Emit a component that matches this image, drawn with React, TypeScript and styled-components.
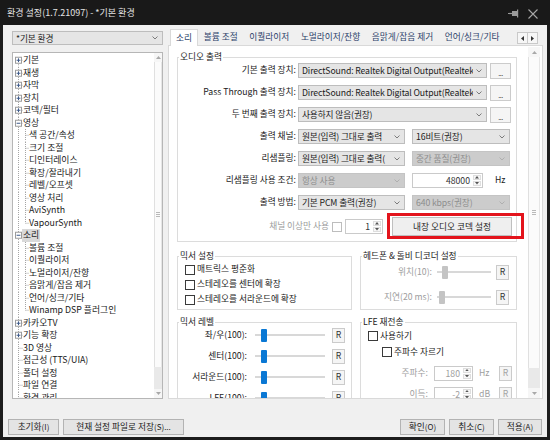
import React from 'react'
import styled, { createGlobalStyle } from 'styled-components'

const GlobalStyle = createGlobalStyle`
	* { box-sizing: border-box; }
	html, body { margin: 0; padding: 0; background: #1c1c1c; }
	body {
		font-family: "Noto Sans CJK KR", "Noto Sans", sans-serif;
		font-size: 8.7px;
		line-height: 1.2;
		color: #1a1a1a;
	}
	button { font-family: inherit; font-size: inherit; cursor: default; }
`

const Window = styled.div`
	width: 550px;
	height: 440px;
	display: flex;
	flex-direction: column;
	background: #1c1c1c;
	overflow: hidden;
`

const TitleBar = styled.div`
	height: 25px;
	flex: none;
	display: flex;
	align-items: center;
	padding: 2px 12px 0 7px;
	background: #191919;
	color: #e4e4e4;
	font-size: 9px;
`

const Title = styled.div`
	flex: 1;
	white-space: nowrap;
`

const TitleButtons = styled.div`
	display: flex;
	align-items: center;
	gap: 8px;
`

const Body = styled.div`
	flex: 1;
	margin: 0 3px 3px;
	background: #f0f0f0;
	display: flex;
	flex-direction: column;
`

const Main = styled.div`
	height: 374px;
	flex: none;
	display: flex;
	gap: 5px;
	padding: 4px 4px 0 9px;
`

const Side = styled.div`
	width: 151px;
	flex: none;
	display: flex;
	flex-direction: column;
	padding-top: 2px;
`

const TreeBox = styled.div`
	flex: 1;
	margin-top: 7px;
	display: flex;
	background: #fff;
	border: 1px solid #b6b6b6;
	overflow: hidden;
`

const TreeList = styled.div`
	flex: 1;
	min-width: 0;
	padding-top: 1px;
	overflow: hidden;
`

const TreeRow = styled.div`
	height: 12.5px;
	display: flex;
	align-items: center;
	white-space: nowrap;
	line-height: 12.5px;
	font-size: 8.8px;
`

const GuideSvg = styled.svg`
	display: block;
	flex: none;
`

const TreeText = styled.span<{ $selected?: boolean }>`
	padding: 0 1px;
	margin-left: -1px;
	background: ${(p) => (p.$selected ? '#d9d9d9' : 'transparent')};
`

const ScrollBar = styled.div<{ $w: number }>`
	width: ${(p) => p.$w}px;
	flex: none;
	display: flex;
	flex-direction: column;
	background: #e9e9e9;
`

const ScrollArrow = styled.div<{ $h: number }>`
	height: ${(p) => p.$h}px;
	flex: none;
	display: flex;
	align-items: center;
	justify-content: center;
	background: #f6f6f6;
`

const ScrollThumb = styled.div<{ $h: number }>`
	height: ${(p) => p.$h}px;
	flex: none;
	display: flex;
	flex-direction: column;
	align-items: center;
	justify-content: center;
	gap: 1px;
	background: #fbfbfb;
	border-left: 1px solid #e0e0e0;
	border-right: 1px solid #e6e6e6;
`

const Grip = styled.span`
	width: 4px;
	height: 1px;
	background: #b9b9b9;
`

const ScrollRest = styled.div`
	flex: 1;
`

const Content = styled.div`
	width: 375px;
	flex: none;
	display: flex;
	flex-direction: column;
`

const TabStrip = styled.div`
	height: 16px;
	flex: none;
	display: flex;
	position: relative;
	z-index: 1;
`

const Tabs = styled.div`
	flex: 1;
	min-width: 0;
	height: 17px;
	display: flex;
	padding-left: 2px;
	overflow: hidden;
`

const Tab = styled.div<{ $active?: boolean }>`
	flex: none;
	height: 17px;
	display: flex;
	align-items: center;
	padding: 0 ${(p) => (p.$active ? 5 : 5.8)}px;
	white-space: nowrap;
	color: #2b3f69;
	background: ${(p) => (p.$active ? '#fff' : 'transparent')};
	border: ${(p) => (p.$active ? '1px solid #d9d9d9' : 'none')};
	border-bottom: none;
`

const TabScroller = styled.div`
	flex: none;
	display: flex;
	height: 12px;
	margin: 3px 5px 0 1px;
`

const TabArrow = styled.div`
	width: 10.5px;
	height: 12px;
	display: flex;
	align-items: center;
	justify-content: center;
	background: #f6f6f6;
	border: 1px solid #c9c9c9;
	& + & {
		border-left: none;
	}
`

const Panel = styled.div`
	flex: 1;
	display: flex;
	background: #fff;
	border: 1px solid #d9d9d9;
	overflow: hidden;
`

const Page = styled.div`
	flex: 1;
	min-width: 0;
	padding: 6px 11px 0 8px;
	overflow: hidden;
`

const PanelScrollSlot = styled.div`
	display: flex;
	padding: 1px 2px 0 0;
`

const Group = styled.fieldset<{ $w?: number }>`
	margin: 0;
	padding: 0;
	min-width: 0;
	border: 1px solid #dcdcdc;
	${(p) => (p.$w ? `width: ${p.$w}px; flex: none;` : '')}
`

const Legend = styled.legend`
	margin-left: 1px;
	padding: 0 1px;
	line-height: 10px;
`

const GroupRow = styled.div<{ $top: number }>`
	display: flex;
	gap: 8px;
	margin-top: ${(p) => p.$top}px;
`

const OutputGrid = styled.div`
	display: grid;
	grid-template-columns: 118px 1fr;
	grid-auto-rows: 15px;
	column-gap: 2px;
	row-gap: 7px;
	align-items: center;
	padding: 1px 4px 0 0;
`

const FieldLabel = styled.div<{ $muted?: boolean }>`
	text-align: right;
	white-space: nowrap;
	color: ${(p) => (p.$muted ? '#9d9d9d' : '#1a1a1a')};
`

const Controls = styled.div<{ $gap: number }>`
	display: flex;
	align-items: center;
	gap: ${(p) => p.$gap}px;
`

const ComboBox = styled.div<{ $w: number; $h?: number; $disabled?: boolean }>`
	width: ${(p) => p.$w}px;
	height: ${(p) => p.$h ?? 15}px;
	flex: none;
	display: flex;
	align-items: center;
	gap: 3px;
	padding: 0 4px 0 3px;
	background: ${(p) => (p.$disabled ? '#cccccc' : '#e5e5e5')};
	border: 1px solid ${(p) => (p.$disabled ? '#c4c4c4' : '#bdbdbd')};
	color: ${(p) => (p.$disabled ? '#8c8c8c' : '#1a1a1a')};
`

const ComboValue = styled.span`
	flex: 1;
	min-width: 0;
	overflow: hidden;
	white-space: nowrap;
	line-height: 13px;
	letter-spacing: -0.12px;
`

const SmallButton = styled.button<{ $w: number; $h: number; $muted?: boolean }>`
	width: ${(p) => p.$w}px;
	height: ${(p) => p.$h}px;
	flex: none;
	margin: 0;
	padding: 0;
	display: flex;
	align-items: center;
	justify-content: center;
	background: #f5f5f5;
	border: 1px solid #cbcbcb;
	border-radius: 0;
	color: ${(p) => (p.$muted ? '#a3a3a3' : '#333')};
	line-height: 1;
`

const Dots = styled.span`
	font-size: 7px;
	margin-top: 5px;
	letter-spacing: -0.5px;
`

const SpinBox = styled.div<{ $w: number; $muted?: boolean }>`
	width: ${(p) => p.$w}px;
	height: 15px;
	flex: none;
	display: flex;
	background: #fff;
	border: 1px solid #cacaca;
	color: ${(p) => (p.$muted ? '#9d9d9d' : '#333')};
`

const SpinValue = styled.span`
	flex: 1;
	text-align: right;
	padding-right: 3px;
	line-height: 13px;
	white-space: nowrap;
`

const SpinArrows = styled.div`
	width: 9px;
	flex: none;
	display: flex;
	flex-direction: column;
	gap: 1px;
	padding: 1px 1px 1px 0;
`

const SpinArrow = styled.div`
	flex: 1;
	display: flex;
	align-items: center;
	justify-content: center;
	background: #f7f7f7;
	border: 1px solid #dedede;
`

const Unit = styled.span<{ $muted?: boolean; $left?: number }>`
	margin-left: ${(p) => p.$left ?? 0}px;
	white-space: nowrap;
	color: ${(p) => (p.$muted ? '#9d9d9d' : '#1a1a1a')};
`

const ChannelRow = styled.div`
	display: flex;
	justify-content: flex-end;
	align-items: center;
	gap: 3px;
	height: 19px;
	margin-top: 7px;
	padding: 0 4px 0 0;
	margin-bottom: 5px;
`

const CodecWrap = styled.div`
	position: relative;
	margin-left: 6px;
`

const RedFrame = styled.span`
	position: absolute;
	inset: -4px -12px -3px -5px;
	border: 3px solid #e3141c;
	pointer-events: none;
`

const CodecButton = styled.button`
	width: 120px;
	height: 19px;
	margin: 0;
	padding: 0;
	display: block;
	background: #efefef;
	border: 1px solid #bfbfbf;
	border-radius: 0;
	color: #1a1a1a;
`

const CheckList = styled.div<{ $pad: string }>`
	display: flex;
	flex-direction: column;
	padding: ${(p) => p.$pad};
`

const CheckRow = styled.div<{ $h: number; $indent: number; $top?: number }>`
	height: ${(p) => p.$h}px;
	margin-top: ${(p) => p.$top ?? 0}px;
	display: flex;
	align-items: center;
	gap: 2px;
	padding-left: ${(p) => p.$indent}px;
	white-space: nowrap;
`

const CheckBox = styled.span<{ $muted?: boolean }>`
	width: 10px;
	height: 10px;
	flex: none;
	background: #fff;
	border: 1px solid ${(p) => (p.$muted ? '#bdbdbd' : '#3a3a3a')};
`

const LevelGrid = styled.div<{ $cols: string; $gap: number; $rowGap: number; $pad: string }>`
	display: grid;
	grid-template-columns: ${(p) => p.$cols};
	grid-auto-rows: 16px;
	column-gap: ${(p) => p.$gap}px;
	row-gap: ${(p) => p.$rowGap}px;
	align-items: center;
	padding: ${(p) => p.$pad};
`

const SliderTrack = styled.div`
	height: 16px;
	display: flex;
	align-items: center;
`

const Rail = styled.span<{ $w?: number }>`
	height: 2px;
	background: #d8d8d8;
	${(p) => (p.$w !== undefined ? `width: ${p.$w}px; flex: none;` : 'flex: 1;')}
`

const Knob = styled.span<{ $muted?: boolean }>`
	width: 6px;
	height: 13px;
	flex: none;
	border-radius: 1px;
	background: ${(p) => (p.$muted ? '#c4c4c4' : '#0a78d4')};
`

const LfeList = styled.div`
	display: flex;
	flex-direction: column;
	padding-top: 2px;
`

const Footer = styled.div`
	flex: 1;
	display: flex;
	justify-content: space-between;
	align-items: flex-start;
	padding: 20px 5px 0;
`

const ButtonGroup = styled.div`
	display: flex;
	gap: 4px;
`

const DialogButton = styled.button<{ $w: number }>`
	width: ${(p) => p.$w}px;
	height: 16px;
	margin: 0;
	padding: 0;
	background: #e4e4e4;
	border: 1px solid #b3b3b3;
	border-radius: 0;
	color: #1a1a1a;
	line-height: 14px;
	white-space: nowrap;
`

const Small = styled.span`
	font-size: 8px;
`

/* ---------- drawings ---------- */

const PinIcon = () => (
	<svg width="12" height="9" viewBox="0 0 12 9">
		<line x1="0" y1="4.5" x2="4" y2="4.5" stroke="#9a9a9a" strokeWidth="1.2" />
		<rect x="4" y="2" width="5" height="5" fill="#9a9a9a" />
		<line x1="9.6" y1="0.5" x2="9.6" y2="8.5" stroke="#9a9a9a" strokeWidth="1.2" />
	</svg>
)

const CloseIcon = () => (
	<svg width="10" height="10" viewBox="0 0 10 10">
		<path d="M0.5 0.5 L9.5 9.5 M9.5 0.5 L0.5 9.5" stroke="#a6a6a6" strokeWidth="1.1" />
	</svg>
)

const Chevron = ({ muted }: { muted?: boolean }) => (
	<svg width="6" height="4" viewBox="0 0 6 4" style={{ flex: 'none' }}>
		<polyline points="0.5,0.5 3,3 5.5,0.5" fill="none" stroke={muted ? '#ababab' : '#6e6e6e'} strokeWidth="0.9" />
	</svg>
)

const Tri = ({ dir, color = '#a8a8a8', size = 5 }: { dir: 'up' | 'down' | 'left' | 'right'; color?: string; size?: number }) => {
	const pts = {
		up: '0,3 2.5,0 5,3',
		down: '0,0 2.5,3 5,0',
		left: '3,0 0,2.5 3,5',
		right: '0,0 3,2.5 0,5',
	}[dir]
	const horiz = dir === 'up' || dir === 'down'
	return (
		<svg width={horiz ? size : size * 0.6} height={horiz ? size * 0.6 : size} viewBox={horiz ? '0 0 5 3' : '0 0 3 5'}>
			<polygon points={pts} fill={color} />
		</svg>
	)
}

const Scroll = ({ w, arrow, thumb }: { w: number; arrow: number; thumb: number }) => (
	<ScrollBar $w={w}>
		<ScrollArrow $h={arrow}>
			<Tri dir="up" />
		</ScrollArrow>
		<ScrollThumb $h={thumb}>
			<Grip />
			<Grip />
			<Grip />
		</ScrollThumb>
		<ScrollRest />
		<ScrollArrow $h={arrow}>
			<Tri dir="down" />
		</ScrollArrow>
	</ScrollBar>
)

const Spin = ({ w, value, muted }: { w: number; value: string; muted?: boolean }) => (
	<SpinBox $w={w} $muted={muted}>
		<SpinValue>{value}</SpinValue>
		<SpinArrows>
			<SpinArrow>
				<Tri dir="up" color="#555" size={4} />
			</SpinArrow>
			<SpinArrow>
				<Tri dir="down" color="#555" size={4} />
			</SpinArrow>
		</SpinArrows>
	</SpinBox>
)

const Combo = ({ w, value, disabled }: { w: number; value: string; disabled?: boolean }) => (
	<ComboBox $w={w} $disabled={disabled}>
		<ComboValue>{value}</ComboValue>
		<Chevron muted={disabled} />
	</ComboBox>
)

const Slider = ({ at, muted }: { at: number; muted?: boolean }) => (
	<SliderTrack>
		<Rail $w={at} />
		<Knob $muted={muted} />
		<Rail />
	</SliderTrack>
)

/* ---------- tree ---------- */

type TreeItem = {
	label: string
	level: 0 | 1
	exp?: '+' | '-'
	selected?: boolean
	first?: boolean
	last?: boolean
}

const kids = (labels: string[]): TreeItem[] =>
	labels.map((label, i) => ({ label, level: 1, last: i === labels.length - 1 }))

const treeItems: TreeItem[] = [
	{ label: '기본', level: 0, exp: '+', first: true },
	{ label: '재생', level: 0, exp: '+' },
	{ label: '자막', level: 0, exp: '+' },
	{ label: '장치', level: 0, exp: '+' },
	{ label: '코덱/필터', level: 0, exp: '+' },
	{ label: '영상', level: 0, exp: '-' },
	...kids(['색 공간/속성', '크기 조절', '디인터레이스', '확장/잘라내기', '레벨/오프셋', '영상 처리', 'AviSynth', 'VapourSynth']),
	{ label: '소리', level: 0, exp: '-', selected: true },
	...kids(['볼륨 조절', '이퀄라이저', '노멀라이저/잔향', '음맑게/잡음 제거', '언어/싱크/기타', 'Winamp DSP 플러그인']),
	{ label: '카카오TV', level: 0, exp: '+' },
	{ label: '기능 확장', level: 0, exp: '+' },
	{ label: '3D 영상', level: 0 },
	{ label: '접근성 (TTS/UIA)', level: 0 },
	{ label: '폴더 설정', level: 0 },
	{ label: '파일 연결', level: 0 },
	{ label: '환경 관리', level: 0 },
]

const RH = 12.5
const MID = 6.25
const dotted = { stroke: '#a5a5a5', strokeWidth: 1, strokeDasharray: '1 1' }

const TreeGuide = ({ item }: { item: TreeItem }) => {
	if (item.level === 1) {
		return (
			<GuideSvg width={16} height={RH}>
				<line x1={5.5} y1={0} x2={5.5} y2={RH} {...dotted} />
				<line x1={12.5} y1={0} x2={12.5} y2={item.last ? MID : RH} {...dotted} />
				<line x1={12.5} y1={MID} x2={16} y2={MID} {...dotted} />
			</GuideSvg>
		)
	}
	return (
		<GuideSvg width={10} height={RH}>
			<line x1={5.5} y1={item.first ? MID : 0} x2={5.5} y2={RH} {...dotted} />
			<line x1={5.5} y1={MID} x2={10} y2={MID} {...dotted} />
			{item.exp && (
				<>
					<rect x={2.5} y={MID - 3} width={6} height={6} fill="#fff" stroke="#9c9c9c" />
					<line x1={3.6} y1={MID} x2={7.4} y2={MID} stroke="#3d5a8a" />
					{item.exp === '+' && <line x1={5.5} y1={MID - 1.9} x2={5.5} y2={MID + 1.9} stroke="#3d5a8a" />}
				</>
			)}
		</GuideSvg>
	)
}

const tabs = ['소리', '볼륨 조절', '이퀄라이저', '노멀라이저/잔향', '음맑게/잡음 제거', '언어/싱크/기타']

const mixerLevels = ['좌/우(100):', '센터(100):', '서라운드(100):', 'LFE(100):']

export default function App() {
	return (
		<>
			<GlobalStyle />
			<Window>
				<TitleBar>
					<Title>환경 설정(1.7.21097) - *기본 환경</Title>
					<TitleButtons>
						<PinIcon />
						<CloseIcon />
					</TitleButtons>
				</TitleBar>
				<Body>
					<Main>
						<Side>
							<ComboBox $w={151} $h={14}>
								<ComboValue>*기본 환경</ComboValue>
								<Chevron />
							</ComboBox>
							<TreeBox>
								<TreeList>
									{treeItems.map((item, i) => (
										<TreeRow key={i}>
											<TreeGuide item={item} />
											<TreeText $selected={item.selected}>{item.label}</TreeText>
										</TreeRow>
									))}
								</TreeList>
								<Scroll w={8} arrow={9} thumb={305} />
							</TreeBox>
						</Side>
						<Content>
							<TabStrip>
								<Tabs>
									{tabs.map((t, i) => (
										<Tab key={t} $active={i === 0}>
											{t}
										</Tab>
									))}
								</Tabs>
								<TabScroller>
									<TabArrow>
										<Tri dir="left" color="#333" size={5} />
									</TabArrow>
									<TabArrow>
										<Tri dir="right" color="#333" size={5} />
									</TabArrow>
								</TabScroller>
							</TabStrip>
							<Panel>
								<Page>
									<Group>
										<Legend>오디오 출력</Legend>
										<OutputGrid>
											<FieldLabel>기본 출력 장치:</FieldLabel>
											<Controls $gap={3}>
												<Combo w={189} value="DirectSound: Realtek Digital Output(Realtek" />
												<SmallButton $w={21} $h={16}>
													<Dots>...</Dots>
												</SmallButton>
											</Controls>
											<FieldLabel>Pass Through 출력 장치:</FieldLabel>
											<Controls $gap={3}>
												<Combo w={189} value="DirectSound: Realtek Digital Output(Realtek" />
												<SmallButton $w={21} $h={16}>
													<Dots>...</Dots>
												</SmallButton>
											</Controls>
											<FieldLabel>두 번째 출력 장치:</FieldLabel>
											<Controls $gap={3}>
												<Combo w={189} value="사용하지 않음(권장)" />
												<SmallButton $w={21} $h={16}>
													<Dots>...</Dots>
												</SmallButton>
											</Controls>
											<FieldLabel>출력 채널:</FieldLabel>
											<Controls $gap={7}>
												<Combo w={107} value="원본(입력) 그대로 출력" />
												<Combo w={98} value="16비트(권장)" />
											</Controls>
											<FieldLabel>리샘플링:</FieldLabel>
											<Controls $gap={7}>
												<Combo w={107} value="원본(입력) 그대로 출력(" />
												<Combo w={98} value="중간 품질(권장)" disabled />
											</Controls>
											<FieldLabel>리샘플링 사용 조건:</FieldLabel>
											<Controls $gap={7}>
												<Combo w={107} value="항상 사용" disabled />
												<Spin w={71} value="48000" />
												<Unit $left={5}>Hz</Unit>
											</Controls>
											<FieldLabel>출력 방법:</FieldLabel>
											<Controls $gap={7}>
												<Combo w={107} value="기본 PCM 출력(권장)" />
												<Combo w={98} value="640 kbps(권장)" disabled />
											</Controls>
										</OutputGrid>
										<ChannelRow>
											<FieldLabel $muted>채널 이상만 사용</FieldLabel>
											<CheckBox $muted />
											<Spin w={38} value="1" />
											<CodecWrap>
												<CodecButton>내장 오디오 코덱 설정</CodecButton>
												<RedFrame />
											</CodecWrap>
										</ChannelRow>
									</Group>

									<GroupRow $top={9}>
										<Group $w={175}>
											<Legend>믹서 설정</Legend>
											<CheckList $pad="1px 0 2px 7px">
												<CheckRow $h={15} $indent={0}>
													<CheckBox />
													매트릭스 평준화
												</CheckRow>
												<CheckRow $h={15} $indent={0}>
													<CheckBox />
													스테레오를 센터에 확장
												</CheckRow>
												<CheckRow $h={15} $indent={0}>
													<CheckBox />
													스테레오를 서라운드에 확장
												</CheckRow>
											</CheckList>
										</Group>
										<Group $w={157}>
											<Legend>헤드폰 &amp; 돌비 디코더 설정</Legend>
											<LevelGrid $cols="71px 54px 13px" $gap={5} $rowGap={9} $pad="3px 0 4px 0">
												<FieldLabel $muted>위치(10):</FieldLabel>
												<Slider at={5} muted />
												<SmallButton $w={13} $h={15}>R</SmallButton>
												<FieldLabel $muted>지연(20 ms):</FieldLabel>
												<Slider at={2} muted />
												<SmallButton $w={13} $h={15}>R</SmallButton>
											</LevelGrid>
										</Group>
									</GroupRow>

									<GroupRow $top={7}>
										<Group $w={175}>
											<Legend>믹서 레벨</Legend>
											<LevelGrid $cols="69px 70px 13px" $gap={7.5} $rowGap={5} $pad="0">
												{mixerLevels.map((l) => (
													<React.Fragment key={l}>
														<FieldLabel>{l}</FieldLabel>
														<Slider at={6} />
														<SmallButton $w={13} $h={15}>R</SmallButton>
													</React.Fragment>
												))}
											</LevelGrid>
										</Group>
										<Group $w={157}>
											<Legend>LFE 재전송</Legend>
											<LfeList>
												<CheckRow $h={14} $indent={7}>
													<CheckBox />
													사용하기
												</CheckRow>
												<CheckRow $h={14} $indent={21} $top={2}>
													<CheckBox />
													주파수 자르기
												</CheckRow>
												<LevelGrid $cols="67px 39px 14px 13px" $gap={6} $rowGap={5} $pad="6px 0 0 0">
													<FieldLabel $muted>주파수:</FieldLabel>
													<Spin w={39} value="180" muted />
													<Unit $muted>Hz</Unit>
													<SmallButton $w={13} $h={15} $muted>R</SmallButton>
													<FieldLabel $muted>이득:</FieldLabel>
													<Spin w={39} value="-2" muted />
													<Unit $muted>dB</Unit>
													<SmallButton $w={13} $h={15} $muted>R</SmallButton>
												</LevelGrid>
											</LfeList>
										</Group>
									</GroupRow>
								</Page>
								<PanelScrollSlot>
									<Scroll w={12} arrow={10} thumb={311} />
								</PanelScrollSlot>
							</Panel>
						</Content>
					</Main>
					<Footer>
						<ButtonGroup>
							<DialogButton $w={51}>
								초기화<Small>(I)</Small>
							</DialogButton>
							<DialogButton $w={121}>
								현재 설정 파일로 저장<Small>(S)...</Small>
							</DialogButton>
						</ButtonGroup>
						<ButtonGroup>
							<DialogButton $w={45}>
								확인<Small>(O)</Small>
							</DialogButton>
							<DialogButton $w={45}>
								취소<Small>(C)</Small>
							</DialogButton>
							<DialogButton $w={44}>
								적용<Small>(A)</Small>
							</DialogButton>
						</ButtonGroup>
					</Footer>
				</Body>
			</Window>
		</>
	)
}
